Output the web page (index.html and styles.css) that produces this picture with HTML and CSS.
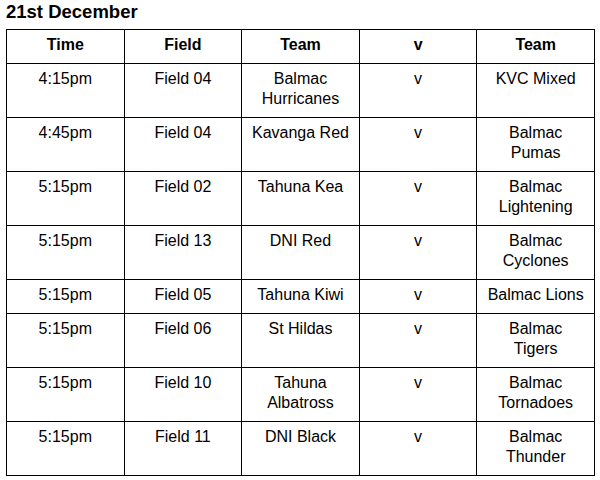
FILE: index.html
```html
<!DOCTYPE html>
<html>
<head>
<meta charset="utf-8">
<link rel="stylesheet" href="styles.css">
</head>
<body>
<h2 class="title">21st December</h2>
<table class="fixtures">
  <thead>
    <tr><th>Time</th><th>Field</th><th>Team</th><th>v</th><th>Team</th></tr>
  </thead>
  <tbody>
    <tr><td>4:15pm</td><td>Field 04</td><td>Balmac<br>Hurricanes</td><td>v</td><td>KVC Mixed<br>&nbsp;</td></tr>
    <tr><td>4:45pm</td><td>Field 04</td><td>Kavanga Red</td><td>v</td><td>Balmac<br>Pumas</td></tr>
    <tr><td>5:15pm</td><td>Field 02</td><td>Tahuna Kea</td><td>v</td><td>Balmac<br>Lightening</td></tr>
    <tr><td>5:15pm</td><td>Field 13</td><td>DNI Red</td><td>v</td><td>Balmac<br>Cyclones</td></tr>
    <tr><td>5:15pm</td><td>Field 05</td><td>Tahuna Kiwi</td><td>v</td><td>Balmac Lions</td></tr>
    <tr><td>5:15pm</td><td>Field 06</td><td>St Hildas</td><td>v</td><td>Balmac<br>Tigers</td></tr>
    <tr><td>5:15pm</td><td>Field 10</td><td>Tahuna<br>Albatross</td><td>v</td><td>Balmac<br>Tornadoes</td></tr>
    <tr><td>5:15pm</td><td>Field 11</td><td>DNI Black</td><td>v</td><td>Balmac<br>Thunder</td></tr>
  </tbody>
</table>
</body>
</html>
```
FILE: styles.css
```css
html, body {
  margin: 0;
  background: #fff;
}
body {
  padding: 1px 6px 0 6px;
  font-family: "Liberation Sans", Arial, sans-serif;
  color: #000;
}
.title {
  margin: 0 0 6px 0;
  font-size: 18.5px;
  line-height: 22px;
  font-weight: bold;
}
.fixtures {
  border-collapse: collapse;
  table-layout: fixed;
  width: 589px;
  font-size: 16px;
  line-height: 20px;
}
.fixtures th,
.fixtures td {
  border: 1px solid #000;
  padding: 5px 4px 8px 4px;
  text-align: center;
  vertical-align: top;
}
.fixtures th {
  font-weight: bold;
}
```
